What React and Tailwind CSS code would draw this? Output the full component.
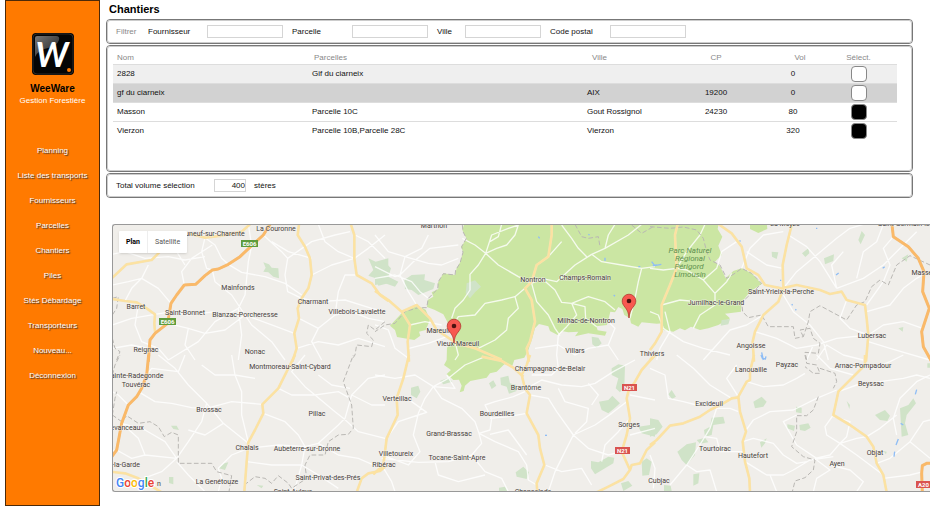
import { useState } from 'react';
import { clsx } from 'clsx';

const MENU = [
  'Planning',
  'Liste des transports',
  'Fournisseurs',
  'Parcelles',
  'Chantiers',
  'Piles',
  'Stés Débardage',
  'Transporteurs',
  'Nouveau...',
  'Déconnexion',
];

const FILTERS = [
  { id: 'fournisseur', label: 'Fournisseur', labelClass: 'w-[59px]' },
  { id: 'parcelle', label: 'Parcelle', labelClass: 'w-[60px]' },
  { id: 'ville', label: 'Ville', labelClass: 'w-[28px]' },
  { id: 'cp', label: 'Code postal', labelClass: 'w-[60px]' },
];

const CHANTIERS = [
  { nom: '2828', parcelles: 'Gif du ciarneix', ville: '', cp: '', vol: 0, selected: false, rowClass: 'bg-[#efefef]' },
  { nom: 'gf du ciarneix', parcelles: '', ville: 'AIX', cp: '19200', vol: 0, selected: false, rowClass: 'bg-[#d2d2d2]' },
  { nom: 'Masson', parcelles: 'Parcelle 10C', ville: 'Gout Rossignol', cp: '24230', vol: 80, selected: true, rowClass: '' },
  { nom: 'Vierzon', parcelles: 'Parcelle 10B,Parcelle 28C', ville: 'Vierzon', cp: '', vol: 320, selected: true, rowClass: '' },
];

// Natural park area, in the coordinates of the second tile
const PARK =
  'M270 20L262 45L275 72L258 95L264 110L256 140L245 160L240 180L205 175L188 205L190 222L170 232L175 245L158 255L156 276L178 284L205 298L222 330L238 350L240 372L216 398L215 435L207 450L228 465L215 477L235 495L252 494L260 512L254 532L266 528L270 512L286 498L335 488L345 475L365 470L388 448L412 452L418 435L448 428L460 405L472 370L480 340L492 327L520 334L525 348L548 360L560 348L580 352L610 350L600 364L640 355L690 362L695 350L668 346L664 334L696 330L706 290L720 292L730 276L742 282L748 300L765 310L768 325L790 335L800 322L845 326L862 325L865 345L895 350L915 340L930 346L948 335L975 345L1000 340L1030 330L1065 310L1050 296L1098 290L1100 262L1125 230L1160 207L1130 175L1100 160L1075 168L1052 190L1036 155L1020 140L1040 120L1030 92L1042 65L1028 42L1032 20Z ' +
  'M45 332L75 300L85 288L125 270L152 284L165 315L152 345L132 350L136 362L118 375L100 372L66 366L60 345Z';

// Each tile is drawn at three times the screen size, then scaled down
const TILES = [
  {
    x: 105,
    y: 215,
    woods: [
      'M475 142L492 148L500 158L520 160L522 190L505 185L490 172L475 170L482 158Z',
      'M790 130L812 140L850 130L850 205L820 212L812 190L790 182L805 165Z',
    ],
    minor: [
      'M20 118L60 110L120 130L190 125L240 135L300 125',
      'M300 68L330 90L350 130L370 148L410 172L480 185L540 205L590 240',
      'M300 68L290 110L305 160L322 165L330 200L380 240L420 300L440 330',
      'M322 90L260 130L230 170L238 210',
      'M200 60L215 110L240 150',
      'M430 28L440 92L430 140L426 180L420 240L400 280L330 320L280 380L190 435',
      'M475 60L530 110L548 130L540 180L548 230L590 250L640 260L720 255L800 280L840 290',
      'M548 130L620 80L690 60L735 50',
      'M620 180L680 150L748 130L790 100L840 60',
      'M22 210L70 200L110 190L160 220L198 265',
      'M60 258L80 220L110 190L130 150',
      'M22 330L80 310L150 298',
      'M100 270L90 330L110 380L160 400L190 435',
      'M188 325L250 340L300 355L360 345L420 300L500 330L568 355',
      'M250 340L240 390L270 435',
      'M400 280L410 360L400 435',
      'M440 330L500 380L540 435',
      'M582 310L640 340L690 300L740 290L790 310L840 320',
      'M575 400L640 380L700 390L760 370L840 395',
      'M640 340L620 380L650 435',
      'M690 300L700 230L720 180L755 180',
      'M150 298L200 290L250 300L330 290',
      'M22 400L80 390L130 400',
      'M640 28L660 80L700 110L748 130',
      'M620 130L550 110L500 80',
      'M750 60L790 80L840 130',
    ],
    borders: [
      'M22 250L40 245L35 280L22 300', 'M22 370L30 400L45 410L35 435', 'M840 320L810 345L790 330L785 355L805 375L800 395L755 390L750 420L740 435',
    ],
    major: [
      'M22 188L65 148L140 135L160 115L200 66L250 55L300 68L350 62L410 50L435 28',
      'M22 252L60 258L95 262L125 280L150 298L148 325L150 350',
      'M583 20L578 60L600 95L615 130L620 180L610 220L590 250L578 280L582 310L568 355L575 400L562 440',
      'M735 20L748 60L748 130L755 180L800 205L825 240L850 258',
    ],
    motorway: ['M500 20L475 60L440 92L405 125L370 148L340 162L322 165L300 182L272 208L238 210L215 240L198 265L192 300L188 325L150 355L135 375L130 440'],
    water: [],
  },
  {
    x: 375,
    y: 215,
    woods: [
      'M0 145L30 142L48 160L40 185L70 200L60 215L30 205L0 210Z',
      'M88 195L110 180L150 178L148 195L180 205L175 222L130 240L110 225L90 222Z',
      'M275 205L300 196L318 215L300 232L285 250L272 235Z',
      'M650 365L670 368L680 385L665 398L652 388Z',
    ],
    minor: [
      'M0 60L40 110L90 125L160 145L200 150L250 130',
      'M160 60L140 100L90 125L75 180L100 230L125 270',
      'M0 190L60 180L110 200L135 230L160 250',
      'M0 155L60 185L75 180L115 140L165 100L250 90',
      'M430 30L420 60L395 90L365 100L332 115L310 150L285 178L285 225L265 255L240 280L230 310',
      'M262 70L300 90L332 115L370 150L430 185L470 205',
      'M332 115L350 60L400 40L430 30',
      'M470 205L500 190L545 200L600 150L650 118L690 100L760 60L800 28',
      'M650 118L680 140L740 150L800 160L840 155',
      'M500 190L540 225L560 262L590 265L605 300L575 335L550 360L545 420',
      'M590 265L640 245L690 260L720 285',
      'M590 265L630 275L632 310L665 335',
      'M470 205L485 260L520 300L540 340L555 362',
      'M450 220L420 245L380 255L330 265L300 300L250 305L235 330',
      'M420 245L430 280L400 310L395 345L360 375L310 400',
      'M560 30L590 70L610 100L635 125',
      'M560 80L520 125L485 150',
      'M690 100L700 60L720 28',
      'M800 160L790 200L780 250L765 310',
      'M0 330L40 345L60 400L100 430',
      'M105 330L150 320L200 330',
      'M102 400L160 385L215 365',
      'M480 400L550 390L600 420L640 400L700 390L730 435',
      'M700 390L720 340L700 320',
      'M380 28L370 65L345 80',
      'M240 380L250 420L240 435',
    ],
    borders: [
      'M262 30L264 50L274 70L260 95L264 112L255 145L242 165L240 180L205 176L190 200L188 222L160 250L155 278L130 278L90 290L60 325L30 330L0 350',
      'M600 28L620 65L640 70L670 65L675 95',
      'M770 30L800 55L835 35',
    ],
    major: [
      'M0 228L40 255L80 290L125 270L165 310L185 345L215 365L245 385L300 400L380 434',
      'M80 290L105 330L98 380L102 440',
      'M530 20V60L520 125L485 150L470 200L450 220L470 255L480 320L465 380L455 400L462 440',
    ],
    motorway: [],
    water: ['M490 65L494 70', 'M640 58L644 60', 'M690 128V138', 'M716 240L720 244', 'M790 155H796'],
  },
  {
    x: 650,
    y: 215,
    woods: [
      'M365 110L385 112L380 132L366 125Z',
      'M456 115L475 100L478 115L466 126Z',
      'M522 130L552 118L550 138L525 148Z',
      'M625 75L635 48L645 60L632 88Z',
      'M755 130L775 118L770 140Z',
      'M215 315L240 312L235 328L212 332Z',
      'M745 340L760 336L758 350Z',
    ],
    minor: [
      'M0 160L40 165L80 160L110 165L160 195L195 235L230 200L245 175',
      'M80 160L110 110L150 60L165 28',
      'M160 195L200 160L215 110L260 80',
      'M195 235L195 270L150 300L130 340',
      'M35 270L90 255L160 262',
      'M400 220L440 170L500 120L560 70L600 40L640 28',
      'M415 60L470 95L510 140L560 220',
      'M560 220L640 190L700 150L760 90L800 50',
      'M560 220L545 150L580 110',
      'M0 290L25 300L40 340L100 380L160 400L240 420',
      'M275 160L300 100L340 60L400 50',
      'M290 110L350 150L398 160',
      'M400 240L430 290L480 330L520 380L535 435',
      'M340 300L290 330L240 345L200 390L160 435',
      'M315 350L380 370L440 400L500 390L560 370L655 360',
      'M590 255L570 310L600 340L655 360',
      'M650 290L720 270L760 220L800 190L818 180',
      'M655 360L700 330L760 320L818 340',
      'M655 380L720 400L840 435',
      'M700 28L680 80L640 110L620 190',
      'M730 65L700 100L720 150L700 200L650 270',
      'M45 290L60 350L30 400L20 435',
      'M490 390L470 435',
      'M500 435L530 390L580 420L640 435',
    ],
    borders: [
      'M0 35L60 40L100 36L140 45L160 70L170 110L180 135L210 150L230 190L255 175L275 160L305 175L335 205L305 235L275 262L278 290L295 308L335 300L355 335L430 335L435 370L460 365L475 320L480 290L510 272L590 315L620 270L645 260L665 215L690 195L715 210L740 150L780 122L840 150',
      'M460 365L450 345L480 340L490 370L510 385L505 415L465 412L470 435',
    ],
    major: [
      'M85 20L75 60L80 160L60 210L35 270L35 350L15 385L0 405',
      'M195 20L245 55L275 95L290 160L325 180L345 210L395 220L440 210L510 225L540 237L575 230L590 255L645 270L650 310L655 360L648 440',
      'M425 30L410 90L398 150L400 220L385 260L340 300L315 350L308 380L312 440',
    ],
    motorway: ['M725 20L730 65L775 95L805 130L822 170L818 230L838 280L815 350L820 395L845 440'],
    water: ['M5 140L14 152L34 148M8 152L20 150', 'M270 76V80', 'M390 196H394', 'M425 268L428 271', 'M436 283L439 286', 'M498 40H502', 'M558 180L566 174', 'M698 160L704 155', 'M335 412L340 435'],
  },
  {
    x: 105,
    y: 355,
    woods: ['M198 212L215 212L222 225L205 222Z', 'M192 366H205V388L192 384Z', 'M342 340L358 325L370 322L360 345Z', 'M455 390L475 392L470 400Z'],
    minor: [
      'M160 0L210 40L250 90L305 145L355 205L430 265',
      'M305 145L290 200L250 260L215 310L170 350L130 365',
      'M100 110L150 140L200 145L260 158L305 160L380 140L472 148',
      'M380 0L390 60L410 110L410 180L430 262',
      'M240 0L220 50L140 40L125 60',
      'M215 310L180 260L120 225L50 205',
      'M215 320L250 360L300 410',
      'M250 225L300 240L355 205',
      'M430 280L380 300L340 340L350 370L340 410',
      'M430 280L520 270L600 275L640 265L700 210L720 190L740 120L790 70L840 60',
      'M475 175L540 200L580 240L600 275L590 330L570 400',
      'M600 0L560 50L600 95L630 120L690 170L715 190',
      'M520 100L560 120L630 120L700 110L735 130',
      'M640 60L680 90L735 100',
      'M640 265L700 300L760 310L840 345',
      'M715 190L760 230L840 250',
      'M425 320L500 330L590 330L640 360L700 400',
      'M50 205L100 250L120 300L215 310',
      'M70 150L40 120L22 110',
      'M0 290L35 285L80 310L120 300',
      'M290 30L330 60L390 60L450 70',
      'M740 120L800 150L840 150',
    ],
    borders: [
      'M22 180L50 200L65 182L100 205L135 200L160 215L178 245L200 232L220 240V325L320 325L335 350L380 362L372 410',
      'M22 180L30 130L35 110', 'M22 60L30 30L45 0', 'M418 390L450 365L480 370L500 385L520 362L550 385L560 400L605 370L600 330L615 300L660 300L670 260L700 240L730 238L745 220L740 150L715 80L730 40L745 0',
    ],
    major: [
      'M570 0L545 50L520 100L472 148L475 175L450 225L430 262L425 320L418 410',
      'M840 335L825 348L790 355L770 370L755 412',
      'M15 350L60 355L100 370L170 412',
    ],
    motorway: ['M131 0L125 60L110 100L95 125L70 150L50 205L35 285L15 312'],
    water: [],
  },
  {
    x: 375,
    y: 355,
    woods: [
      'M108 98L130 92L136 110L125 130L108 120Z',
      'M195 78L220 68L232 80L205 88Z',
      'M342 85L355 76L364 92L350 102Z',
      'M376 68L400 62L405 85L424 90L425 108L402 116L395 95L378 90Z',
      'M710 40L730 28L750 32L748 95L735 112L722 100L730 70L710 60Z',
      'M672 140L700 135L712 122L735 145L720 158L700 175L680 165Z',
      'M422 352L445 335L462 352L455 372L425 365Z',
      'M648 318L670 322L700 305L718 308L715 325L690 340L660 358L648 340Z',
      'M790 215L840 208V245L800 235Z',
      'M800 320L815 310L830 320L822 360L802 362Z',
      'M372 398L390 395L398 410H372Z', 'M738 385L760 378L772 392L745 408Z',
    ],
    minor: [
      'M0 60L60 70L120 60L175 95L240 100L215 60',
      'M175 95L150 130L130 175L115 240L135 290L100 330L20 300',
      'M68 120L110 140L155 172L130 180',
      'M175 95L200 130L260 160L300 200L312 235L320 265L290 300L220 320L130 322L20 310',
      'M175 95L220 70L270 30L330 5',
      'M312 235L345 225L350 190L330 150L360 140L415 125L450 110',
      'M312 235L360 260L430 290L455 330L460 375L485 390',
      'M345 238L400 225L455 300',
      'M290 300L330 350L380 370L400 410',
      'M455 100L500 75L560 90L620 95L660 85L715 50L780 15',
      'M465 120L520 130L545 170L595 240L570 290L540 350L520 410',
      'M595 240L660 210L710 175L755 140',
      'M595 240L640 280L700 300L740 290',
      'M550 100L570 140L640 160L635 200L600 235',
      'M640 85L670 120L650 150',
      'M765 190L730 230L690 270L680 320',
      'M455 175L400 185L345 190',
      'M35 250L70 200L130 180',
      'M20 330L50 380L60 410',
      'M180 320L190 360L250 380L330 360',
      'M510 330L560 350L620 340L650 390',
      'M545 0L550 40L530 60L470 60',
      'M765 120L840 135',
      'M765 240L840 220',
    ],
    borders: [],
    major: [
      'M320 5L380 18L415 38L445 65',
      'M102 0L85 70L65 130L68 180L35 250L25 330L-5 358',
      'M465 0L455 30L440 60L450 100L465 120L455 175L490 240L495 280L508 330L485 385L487 412',
      'M840 0L800 45L780 80L760 110L755 130L765 190L755 240L740 290L765 345',
      'M665 412L700 395L745 372L765 345L770 330L795 325L815 285L840 262',
    ],
    motorway: [],
    water: ['M510 241H516'],
  },
  {
    x: 650,
    y: 355,
    woods: [
      'M55 118L65 105L78 125L66 132Z',
      'M0 190L25 195L38 215L20 238L0 245Z',
      'M185 188L220 185L225 205L190 210L185 240L165 245L162 225L180 215Z',
      'M82 290L110 268L138 262L135 300L110 330L95 315Z',
      'M140 255L165 248L175 262L150 266Z',
      'M130 358L148 355L145 385L130 392Z',
      'M310 140L335 125L350 140L340 155L315 160Z',
      'M330 262L350 250L345 265L334 278Z',
      'M438 155L455 158V175L438 172Z',
      'M412 208L435 212L432 228L412 220Z', 'M448 210L475 205L482 218L465 228L450 225Z',
      'M675 180L705 165L720 182L712 198L690 195Z',
      'M750 160L775 150L790 130L798 145L770 180L765 205L775 240L755 245Z',
      'M590 138L600 150L598 162Z', 'M42 390L62 392L65 408H42Z', 'M700 288L710 290L708 298Z', 'M832 25H845V38H832Z',
    ],
    minor: [
      'M0 40L45 60L55 130L100 140L140 150',
      'M80 0L130 40L180 90L245 130',
      'M265 170L240 160L200 160L180 220L165 245L200 250L210 290L280 290',
      'M285 230L310 195L360 170L430 165L500 130L560 105',
      'M290 80L340 95L400 90L440 70L465 55',
      'M265 125L230 70L260 30',
      'M278 260L310 250L370 265L400 300L440 325L470 320',
      'M285 320L350 360L400 360L430 345L480 315L550 305',
      'M565 110L620 90L690 80L760 70L800 60L840 70',
      'M550 180L525 215L530 240L570 265L540 300L495 310',
      'M550 185L600 200L590 245L570 265L620 300L680 345L700 360',
      'M570 265L620 250L650 245',
      'M540 330L600 345L640 380L620 410',
      'M500 315L540 345L500 370L490 410',
      'M680 325L720 310L780 260L820 200L840 195',
      'M780 260L840 310',
      'M740 240L730 190L750 130L800 80L840 60',
      'M650 245L690 220L740 180',
      'M0 300L15 340L10 400',
      'M110 330L140 350L180 345L200 410',
      'M165 245L130 300L110 330L60 390',
      'M820 350L780 360L700 370',
      'M360 360L380 410', 'M500 0L540 40L610 60', 'M670 40L720 20L760 0', 'M440 180L400 200L440 270L500 310',
    ],
    borders: [
      'M465 0L470 25L500 30L510 55L490 55L465 35', 'M510 40L555 55L560 80L550 100', 'M505 125L490 165L470 182L440 182V230L425 275L460 305L495 315L490 345L465 368L435 378L427 410',
    ],
    major: [
      'M0 270L20 255L60 212L100 205L150 185L180 165L220 145L245 130L265 127',
      'M312 0L300 50L300 75L290 80L265 125L270 170L288 230L278 260L285 320L298 370L300 412',
      'M645 0V30L600 75L565 110L550 180L600 210L650 245L670 275L680 325L700 360L710 412',
      'M0 15L15 0',
    ],
    motorway: ['M850 325H830L817 332L815 355L817 412'],
    water: ['M333 0L337 10L346 12L348 4', 'M796 118L800 104', 'M752 205L760 210', 'M745 252L738 270', 'M734 290L732 305'],
  },
];

const TOWNS = [
  ['Marthon', 434, 228],
  ['La Couronne', 276, 231],
  ['uneuf-sur-Charente', 215, 236],
  ['La Meyze', 785, 226],
  ['Saint-Germain-les-Belles', 916, 226],
  ['Mainfonds', 238, 290],
  ['Barret', 136, 309],
  ['Saint-Bonnet', 185, 315],
  ['Blanzac-Porcheresse', 245, 317],
  ['Charmant', 313, 304],
  ['Villebois-Lavalette', 357, 314],
  ['Reignac', 146, 352],
  ['Nonac', 255, 354],
  ['Nontron', 533, 282],
  ['Champs-Romain', 585, 280],
  ['Mareuil', 438, 333],
  ['Vieux-Mareuil', 458, 346],
  ['Milhac-de-Nontron', 586, 323],
  ['Villars', 575, 353],
  ['Thiviers', 652, 356],
  ['Saint-Yrieix-la-Perche', 781, 294],
  ['Jumilhac-le-Grand', 716, 305],
  ['Angoisse', 751, 348],
  ['Lubersac', 872, 338],
  ['Masseret', 926, 275],
  ['Montmoreau-Saint-Cybard', 290, 369],
  ['Sainte-Radegonde', 135, 378],
  ['Touvérac', 136, 387],
  ['Brossac', 209, 412],
  ['Pillac', 317, 416],
  ['Chevanceaux', 123, 430],
  ['Chalais', 247, 450],
  ['Aubeterre-sur-Dronne', 307, 451],
  ['-la-Garde', 126, 467],
  ['La Genétouze', 217, 484],
  ['Saint-Privat-des-Prés', 328, 480],
  ['Saint-Aulaye', 293, 494],
  ['Verteillac', 397, 401],
  ['Villetoureix', 396, 456],
  ['Ribérac', 384, 467],
  ['Champagnac-de-Belair', 550, 371],
  ['Brantôme', 526, 390],
  ['Bourdeilles', 497, 416],
  ['Grand-Brassac', 449, 436],
  ['Tocane-Saint-Apre', 457, 460],
  ['Chancelade', 533, 494],
  ['Sorges', 629, 427],
  ['Cubjac', 659, 483],
  ['Excideuil', 709, 406],
  ['Lanouaille', 751, 372],
  ['Payzac', 787, 367],
  ['Arnac-Pompadour', 863, 368],
  ['Beyssac', 871, 386],
  ['Tourtoirac', 715, 451],
  ['Hautefort', 753, 458],
  ['Ayen', 837, 466],
  ['Objat', 875, 455],
];

const PARK_NAME = [
  ['Parc Naturel', 690, 253],
  ['Régional', 690, 261],
  ['Périgord', 689, 269],
  ['Limousin', 690, 277],
];

const SHIELDS = [
  { name: 'E606', x: 241, y: 240, w: 17, color: '#5f9c3c' },
  { name: 'E606', x: 159, y: 318, w: 17, color: '#5f9c3c' },
  { name: 'N21', x: 622, y: 384, w: 15, color: '#d9534f' },
  { name: 'N21', x: 615, y: 447, w: 15, color: '#d9534f' },
  { name: 'A20', x: 916, y: 481, w: 15, color: '#d9534f' },
];

const MARKERS = [
  { x: 454, y: 343 },
  { x: 629, y: 318 },
];

const tileTransform = (tile) => `translate(${tile.x} ${tile.y}) scale(0.33333)`;

function Layer({ name, ...props }) {
  return (
    <g fill="none" strokeLinejoin="round" {...props}>
      {TILES.map((tile) => (
        <path key={`${tile.x}-${tile.y}`} d={tile[name].join('')} transform={tileTransform(tile)} />
      ))}
    </g>
  );
}

function Marker({ x, y }) {
  return (
    <g transform={`translate(${x} ${y})`}>
      <path
        d="M0 0C-0.6 -6 -1.8 -8 -4.2 -11C-5.8 -13 -6.8 -14.8 -6.8 -17A6.8 6.8 0 0 1 6.8 -17C6.8 -14.8 5.8 -13 4.2 -11C1.8 -8 0.6 -6 0 0Z"
        fill="#f75850"
        stroke="#b3362f"
        strokeWidth="0.8"
      />
      <circle cy="-17" r="2.3" fill="#4d1210" />
    </g>
  );
}

function MapView() {
  const [mapType, setMapType] = useState('Plan');

  return (
    <section
      aria-label="Carte"
      className="relative ml-[6px] mr-[5px] h-[268px] overflow-hidden rounded-l-[3px] border border-r-0 border-[#999] bg-[#f0eeea] font-[family-name:Roboto,sans-serif]"
    >
      <svg className="block h-full w-full">
        <g transform="translate(-113 -225)">
          <path d={PARK} fill="#cbe6a3" transform={tileTransform(TILES[1])} />
          <path d="M300 20H350L352 42L325 54L300 42Z" fill="#cbe6a3" transform={tileTransform(TILES[2])} />
          <Layer name="woods" fill="#d0e3c8" />
          <Layer name="minor" stroke="#fff" strokeWidth="4" strokeOpacity="0.8" />
          <Layer name="borders" stroke="#b9b7b3" strokeWidth="3" strokeDasharray="14 7" />
          <Layer name="water" stroke="#8fbdf5" strokeWidth="4" />
          <Layer name="major" stroke="#f5e2b0" strokeWidth="8" />
          <Layer name="major" stroke="#fde2a0" strokeWidth="5" />
          <Layer name="motorway" stroke="#f3bb74" strokeWidth="9" />
          <Layer name="motorway" stroke="#fbb968" strokeWidth="6" />

          {SHIELDS.map((s) => (
            <g key={`${s.x}-${s.y}`}>
              <rect x={s.x} y={s.y} width={s.w} height="7" fill={s.color} />
              <text x={s.x + s.w / 2} y={s.y + 6} textAnchor="middle" fill="#fff" className="text-[6px] font-bold">
                {s.name}
              </text>
            </g>
          ))}

          <g textAnchor="middle" fill="#46403a" stroke="#f5f3f0" strokeWidth="1" strokeOpacity="0.7" paintOrder="stroke" className="text-[7px]">
            {TOWNS.map(([name, x, y]) => (
              <text key={name} x={x} y={y}>
                {name}
              </text>
            ))}
          </g>
          <g textAnchor="middle" fill="#5f9150" className="text-[8px] italic">
            {PARK_NAME.map(([line, x, y]) => (
              <text key={line} x={x} y={y}>
                {line}
              </text>
            ))}
          </g>

          {MARKERS.map((m) => (
            <Marker key={m.x} {...m} />
          ))}

          <text x="157" y="486" fill="#46403a" className="text-[7px]">n</text>
          <text x="116" y="487" stroke="#fff" strokeWidth="2" paintOrder="stroke" className="text-[12px] font-medium">
            <tspan fill="#4285f4">G</tspan>
            <tspan fill="#ea4335">o</tspan>
            <tspan fill="#fbbc05">o</tspan>
            <tspan fill="#4285f4">g</tspan>
            <tspan fill="#34a853">l</tspan>
            <tspan fill="#ea4335">e</tspan>
          </text>
        </g>
      </svg>

      <div className="absolute left-[6px] top-[6px] flex h-[22px] rounded-[1px] bg-white text-[7px] shadow-sm">
        {['Plan', 'Satellite'].map((type) => (
          <button
            key={type}
            type="button"
            onClick={() => setMapType(type)}
            className={clsx(
              'border-r border-[#eee] px-[7px] last:border-r-0',
              mapType === type ? 'font-bold text-black' : 'text-[#565656]'
            )}
          >
            {type}
          </button>
        ))}
      </div>
    </section>
  );
}

function Logo() {
  return (
    <svg viewBox="0 0 42 42" className="h-[42px] w-[42px]" role="img" aria-label="WeeWare">
      <defs>
        <linearGradient id="gloss" x1="0" y1="0" x2="1" y2="1">
          <stop offset="0" stopColor="#777" />
          <stop offset="1" stopColor="#1c1c1c" />
        </linearGradient>
      </defs>
      <rect width="42" height="42" rx="4" fill="#050505" />
      <rect x="1" y="1" width="40" height="40" rx="4" fill="none" stroke="#2b2b2b" />
      <path d="M3 5Q3 3 5 3H24Q28 3 27 7Q25 13 16 15Q6 17 3 24Z" fill="url(#gloss)" />
      <text x="20" y="34" textAnchor="middle" fill="#fff" className="font-[family-name:Lato,sans-serif] text-[34px] font-bold italic">
        W
      </text>
      <circle cx="37" cy="37" r="2" fill="#ff7a00" />
    </svg>
  );
}

function Sidebar() {
  return (
    <aside className="flex w-[95px] shrink-0 flex-col items-center border border-[#4d2a08] bg-[#ff7a00] pt-[32px] text-white">
      <Logo />
      <p className="mt-[8px] text-[10px] leading-[12px] font-bold text-black">WeeWare</p>
      <p className="text-[8px] leading-[12px]">Gestion Forestière</p>
      <nav className="mt-[31px] flex flex-col text-center text-[8px] leading-[25px] whitespace-nowrap [text-shadow:1px_1px_1px_#333]">
        {MENU.map((item) => (
          <a key={item} href="#">
            {item}
          </a>
        ))}
      </nav>
    </aside>
  );
}

function Panel({ className, children }) {
  return <div className={clsx('mr-[22px] rounded-[4px] border border-[#777] outline-1 -outline-offset-2 outline-[#ccc]', className)}>{children}</div>;
}

export default function App() {
  const [rows, setRows] = useState(CHANTIERS);
  const total = rows.reduce((sum, row) => sum + (row.selected ? row.vol : 0), 0);

  const toggle = (nom) =>
    setRows(rows.map((row) => (row.nom === nom ? { ...row, selected: !row.selected } : row)));

  return (
    <div className="flex min-h-screen bg-white pl-[5px] font-['Liberation_Sans',Arial,sans-serif] text-[8px] text-[#111]">
      <Sidebar />

      <main className="min-w-0 flex-1 pl-[6px]">
        <h1 className="px-[3px] pt-[3px] pb-[4px] text-[11px] leading-[12px] font-bold text-black">Chantiers</h1>

        <Panel className="flex h-[25px] items-center pl-[9px]">
          <span className="w-[32px] text-[#888]">Filtrer</span>
          {FILTERS.map((f) => (
            <div key={f.id} className="mr-[9px] flex items-center">
              <label htmlFor={f.id} className={f.labelClass}>
                {f.label}
              </label>
              <input id={f.id} type="text" className="h-[13px] w-[76px] border border-[#d5d5d5] px-1" />
            </div>
          ))}
        </Panel>

        <Panel className="mt-[1px] min-h-[127px] pt-[6px] pr-[15px] pl-[6px]">
          <table className="w-full table-fixed border-collapse">
            <colgroup>
              <col className="w-[195px]" />
              <col />
              <col className="w-[103px]" />
              <col className="w-[60px]" />
              <col className="w-[94px]" />
              <col className="w-[57px]" />
            </colgroup>
            <thead>
              <tr className="h-[12px] text-left leading-[10px] text-[#888]">
                <th className="pl-[4px] font-normal">Nom</th>
                <th className="pl-[6px] font-normal">Parcelles</th>
                <th className="pl-[9px] font-normal">Ville</th>
                <th className="text-center font-normal">CP</th>
                <th className="pl-[14px] text-center font-normal">Vol</th>
                <th className="pr-[20px] text-center font-normal">Sélect.</th>
              </tr>
            </thead>
            <tbody>
              {rows.map((row) => (
                <tr key={row.nom} className={clsx('h-[19px] border-t border-[#ddd]', row.rowClass)}>
                  <td className="pl-[4px]">{row.nom}</td>
                  <td className="pl-[4px]">{row.parcelles}</td>
                  <td className="pl-[4px]">{row.ville}</td>
                  <td className="text-center">{row.cp}</td>
                  <td className="text-center">{row.vol}</td>
                  <td className="pr-[20px]">
                    <input
                      type="checkbox"
                      aria-label={`Sélectionner ${row.nom}`}
                      checked={row.selected}
                      onChange={() => toggle(row.nom)}
                      className="mx-auto block h-[16px] w-[16px] appearance-none rounded-[4px] border border-[#888] bg-white checked:bg-black"
                    />
                  </td>
                </tr>
              ))}
            </tbody>
          </table>
        </Panel>

        <Panel className="mt-[1px] flex h-[25px] items-center pl-[9px]">
          <label htmlFor="total" className="w-[98px]">
            Total volume sélection
          </label>
          <input id="total" type="text" readOnly value={total} className="h-[13px] w-[32px] border border-[#d5d5d5] text-right" />
          <span className="ml-[8px]">stères</span>
        </Panel>

        <div className="pt-[26px] pb-[14px]">
          <MapView />
        </div>
      </main>
    </div>
  );
}
